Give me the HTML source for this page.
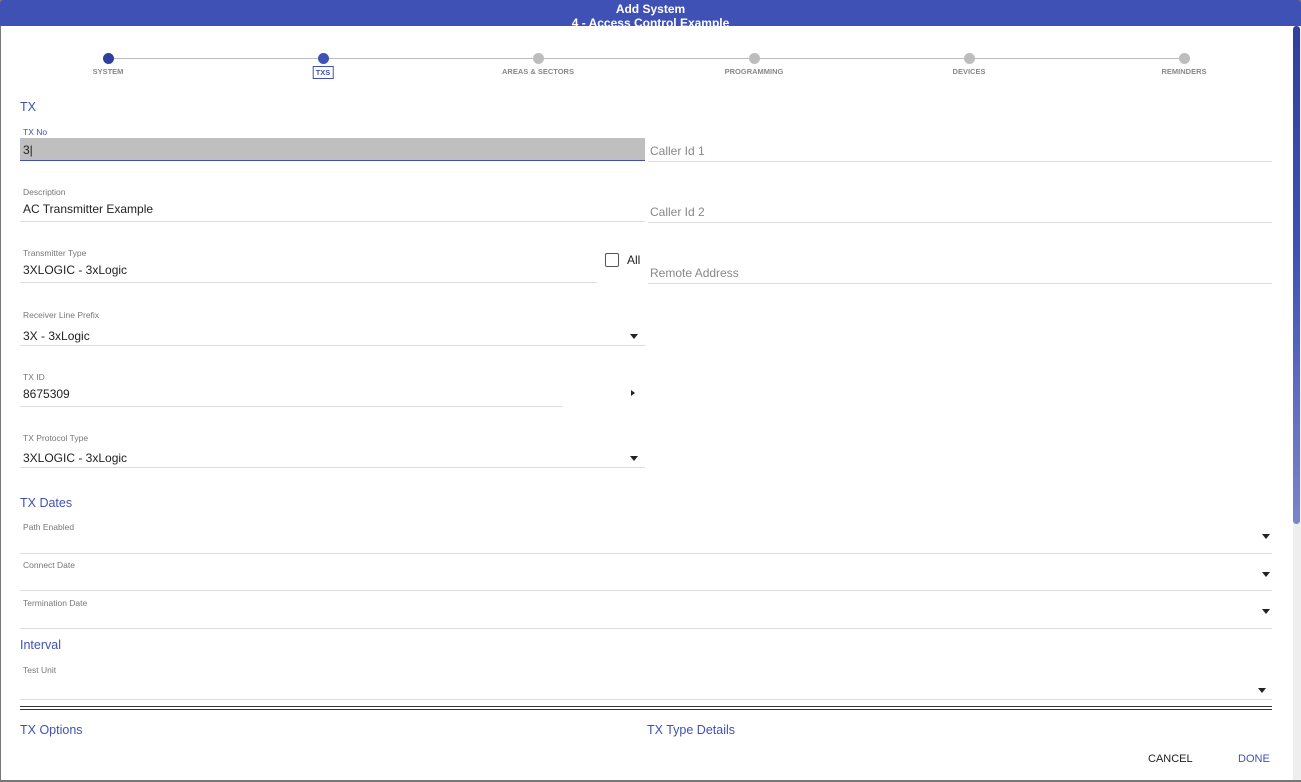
<!DOCTYPE html>
<html><head><style>
body{margin:0;width:1301px;height:782px;overflow:hidden;background:#777;font-family:"Liberation Sans",sans-serif;position:relative}
.a{position:absolute}
.hdr{left:0;top:0;width:1301px;height:26px;background:#3f51b5;color:#fff;text-align:center;font-size:12px;line-height:14px;overflow:hidden;border-radius:4px 4px 0 0;font-weight:bold;padding-top:2px;box-sizing:border-box}
.modal{left:1px;top:26px;width:1299px;height:754px;background:#fff}
.lbl{font-size:8.5px;color:#777}
.val{font-size:12px;color:#222}
.ph{font-size:12px;color:#888}
.line{height:1px;background:#ddd}
.sec{font-size:12.5px;color:#3f51b5}
.dot{width:11px;height:11px;border-radius:50%}
.st{font-size:7.5px;color:#888;transform:translateX(-50%);white-space:nowrap;font-weight:bold}
.caret{width:0;height:0;border-left:4px solid transparent;border-right:4px solid transparent;border-top:5px solid #222}
</style></head><body>
<div class="a hdr">Add System<br>4 - Access Control Example</div>
<div class="a modal"></div>
<div class="a" style="left:108px;top:58px;width:1076px;height:1px;background:#bbb"></div>
<div class="a dot" style="left:103px;top:53px;background:#303f9f"></div>
<div class="a dot" style="left:318px;top:53px;background:#3f51b5"></div>
<div class="a dot" style="left:533px;top:53px;background:#bdbdbd"></div>
<div class="a dot" style="left:749px;top:53px;background:#bdbdbd"></div>
<div class="a dot" style="left:964px;top:53px;background:#bdbdbd"></div>
<div class="a dot" style="left:1179px;top:53px;background:#bdbdbd"></div>
<div class="a st" style="left:108px;top:67px">SYSTEM</div>
<div class="a st" style="left:323px;top:66px;color:#3f51b5;border:1px solid #3f51b5;padding:1px 2px">TXS</div>
<div class="a st" style="left:538px;top:67px">AREAS &amp; SECTORS</div>
<div class="a st" style="left:754px;top:67px">PROGRAMMING</div>
<div class="a st" style="left:969px;top:67px">DEVICES</div>
<div class="a st" style="left:1184px;top:67px">REMINDERS</div>

<div class="a sec" style="left:20px;top:100px">TX</div>
<div class="a lbl" style="left:23px;top:127px;color:#3f51b5">TX No</div>
<div class="a" style="left:20px;top:138px;width:625px;height:22px;background:#bfbfbf;border-bottom:1px solid #3f51b5"></div>
<div class="a val" style="left:23px;top:143px">3|</div>
<div class="a ph" style="left:650px;top:144px">Caller Id 1</div>
<div class="a line" style="left:648px;top:161px;width:624px"></div>

<div class="a lbl" style="left:23px;top:187px">Description</div>
<div class="a val" style="left:23px;top:202px">AC Transmitter Example</div>
<div class="a line" style="left:20px;top:221px;width:625px"></div>
<div class="a ph" style="left:650px;top:205px">Caller Id 2</div>
<div class="a line" style="left:648px;top:222px;width:624px"></div>

<div class="a lbl" style="left:23px;top:248px">Transmitter Type</div>
<div class="a val" style="left:23px;top:263px">3XLOGIC - 3xLogic</div>
<div class="a line" style="left:20px;top:282px;width:577px"></div>
<div class="a" style="left:605px;top:253px;width:12px;height:12px;border:1px solid #555;border-radius:2px"></div>
<div class="a val" style="left:627px;top:253px">All</div>
<div class="a ph" style="left:650px;top:266px">Remote Address</div>
<div class="a line" style="left:648px;top:283px;width:624px"></div>

<div class="a lbl" style="left:23px;top:310px">Receiver Line Prefix</div>
<div class="a val" style="left:23px;top:329px">3X - 3xLogic</div>
<div class="a caret" style="left:630px;top:334px"></div>
<div class="a line" style="left:20px;top:345px;width:625px"></div>

<div class="a lbl" style="left:23px;top:372px">TX ID</div>
<div class="a val" style="left:23px;top:387px">8675309</div>
<div class="a" style="left:631px;top:390px;border-top:3px solid transparent;border-bottom:3px solid transparent;border-left:4px solid #222"></div>
<div class="a line" style="left:20px;top:406px;width:543px"></div>

<div class="a lbl" style="left:23px;top:433px">TX Protocol Type</div>
<div class="a val" style="left:23px;top:451px">3XLOGIC - 3xLogic</div>
<div class="a caret" style="left:630px;top:456px"></div>
<div class="a line" style="left:20px;top:467px;width:625px"></div>

<div class="a sec" style="left:20px;top:496px">TX Dates</div>
<div class="a lbl" style="left:23px;top:522px">Path Enabled</div>
<div class="a caret" style="left:1262px;top:534px"></div>
<div class="a line" style="left:20px;top:553px;width:1252px"></div>
<div class="a lbl" style="left:23px;top:560px">Connect Date</div>
<div class="a caret" style="left:1262px;top:572px"></div>
<div class="a line" style="left:20px;top:590px;width:1252px"></div>
<div class="a lbl" style="left:23px;top:598px">Termination Date</div>
<div class="a caret" style="left:1262px;top:609px"></div>
<div class="a line" style="left:20px;top:628px;width:1252px"></div>

<div class="a sec" style="left:20px;top:638px">Interval</div>
<div class="a lbl" style="left:23px;top:665px">Test Unit</div>
<div class="a caret" style="left:1258px;top:688px"></div>
<div class="a line" style="left:20px;top:699px;width:1252px"></div>
<div class="a" style="left:20px;top:706px;width:1252px;height:1px;background:#333"></div>
<div class="a" style="left:20px;top:709px;width:1252px;height:1px;background:#333"></div>

<div class="a sec" style="left:20px;top:723px">TX Options</div>
<div class="a sec" style="left:647px;top:723px">TX Type Details</div>
<div class="a" style="left:1148px;top:753px;font-size:11px;color:#222">CANCEL</div>
<div class="a" style="left:1238px;top:753px;font-size:11px;color:#3f51b5">DONE</div>

<div class="a" style="left:1293px;top:26px;width:8px;height:754px;background:#eee"></div>
<div class="a" style="left:1293px;top:26px;width:7px;height:498px;border-radius:4px;background:linear-gradient(#303f9f,#3f51b5 45%,#7986cb)"></div>
</body></html>
